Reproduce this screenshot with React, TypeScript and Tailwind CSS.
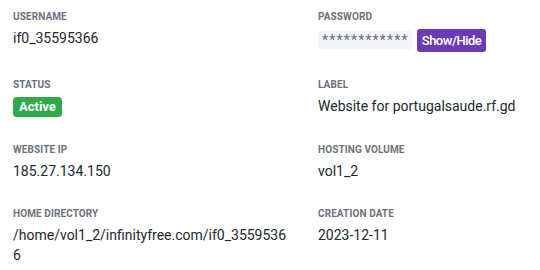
import React, { useState } from 'react'

type Field = {
    label: string
    value: React.ReactNode
}

function Label({ children }: { children: React.ReactNode }) {
    return (
        <div className="mb-[4px] text-[10px] font-bold uppercase leading-[15px] tracking-[0.01em] text-[#6b7280]">
            {children}
        </div>
    )
}

function PasswordField() {
    const [visible, setVisible] = useState(false)
    const password = 'Xk9pQ2mLr7Tz'

    return (
        <div className="flex h-[24px] items-center gap-[4px]">
            <span className="rounded-[3px] bg-[#f3f4f8] px-[4px] text-[14px] leading-[18px] tracking-[1.2px] text-[#6b7280]">
                {visible ? password : '************'}
            </span>
            <button
                type="button"
                onClick={() => setVisible(!visible)}
                className="h-[23px] rounded-[3px] bg-[#6a3bb5] px-[5px] text-[13px] font-medium leading-[23px] tracking-[-0.5px] text-white"
            >
                Show/Hide
            </button>
        </div>
    )
}

export default function App() {
    const fields: Field[] = [
        { label: 'Username', value: 'if0_35595366' },
        { label: 'Password', value: <PasswordField /> },
        {
            label: 'Status',
            value: (
                <span className="inline-block h-[20px] rounded-[4px] bg-[#2eaa4a] px-[6px] text-[13px] font-bold leading-[20px] text-white">
                    Active
                </span>
            ),
        },
        { label: 'Label', value: 'Website for portugalsaude.rf.gd' },
        { label: 'Website IP', value: '185.27.134.150' },
        { label: 'Hosting Volume', value: 'vol1_2' },
        { label: 'Home Directory', value: '/home/vol1_2/infinityfree.com/if0_35595366' },
        { label: 'Creation Date', value: '2023-12-11' },
    ]

    return (
        <div
            className="min-h-[270px] bg-white pl-[13px] pt-[9px]"
            style={{ fontFamily: 'Roboto, "Liberation Sans", sans-serif' }}
        >
            <div className="grid grid-cols-[278px_1fr] gap-x-[27px] gap-y-[25px]">
                {fields.map((f) => (
                    <div key={f.label}>
                        <Label>{f.label}</Label>
                        <div className="break-all text-[14px] leading-[20px] text-[#222831]">{f.value}</div>
                    </div>
                ))}
            </div>
        </div>
    )
}
